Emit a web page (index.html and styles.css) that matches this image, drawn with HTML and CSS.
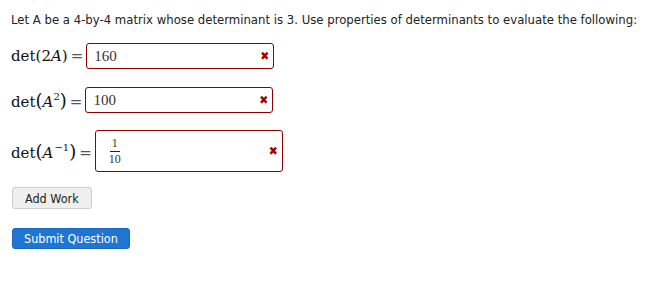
FILE: index.html
```html
<!DOCTYPE html>
<html lang="en">
  <head>
    <meta charset="UTF-8" />
    <title>Determinants</title>
    <link rel="stylesheet" href="styles.css">
  </head>
  <body>
    <main class="problem">
      <p class="intro">Let A be a 4-by-4 matrix whose determinant is 3. Use properties of determinants to evaluate the following:</p>

      <div class="row">
        <span class="math">det<span class="paren">(</span>2<i>A</i><span class="paren">)</span><span class="eq">=</span></span>
        <div class="answer">
          <span class="value">160</span>
          <span class="wrong">&#10006;</span>
        </div>
      </div>

      <div class="row">
        <span class="math">det<span class="paren big">(</span><i>A</i><sup>2</sup><span class="paren big">)</span><span class="eq">=</span></span>
        <div class="answer">
          <span class="value">100</span>
          <span class="wrong">&#10006;</span>
        </div>
      </div>

      <div class="row tall">
        <span class="math">det<span class="paren big">(</span><i>A</i><sup class="inv">&minus;1</sup><span class="paren big">)</span><span class="eq">=</span></span>
        <div class="answer frac-box">
          <span class="value frac">
            <span class="num">1</span>
            <span class="den">10</span>
          </span>
          <span class="wrong">&#10006;</span>
        </div>
      </div>

      <button class="btn-work">Add Work</button>
      <button class="btn-submit">Submit Question</button>
    </main>
  </body>
</html>
```

FILE: styles.css
```css
body {
  margin: 0;
  font-family: "DejaVu Sans Condensed", "DejaVu Sans", sans-serif;
  color: #222;
  background: #fff;
}
.problem {
  padding: 12px 11px;
}
.intro {
  margin: 0 0 15px 0;
  font-size: 13px;
  line-height: 16px;
  white-space: nowrap;
}
.row {
  display: flex;
  align-items: center;
  height: 26px;
  margin-bottom: 18px;
}
.row + .row {
  margin-bottom: 17px;
}
.row.tall {
  height: 42px;
  margin-bottom: 15px;
}
.math {
  font-family: "DejaVu Serif", "Liberation Serif", serif;
  font-size: 15px;
  color: #111;
  white-space: nowrap;
}
.math i {
  font-style: italic;
}
.math sup {
  font-size: 10px;
  vertical-align: 7px;
}
.math sup.inv {
  margin-left: 1px;
}
.paren.big {
  font-size: 18px;
}
.eq {
  margin: 0 3px;
  color: #555;
}
.answer {
  display: flex;
  align-items: center;
  justify-content: space-between;
  box-sizing: border-box;
  width: 188px;
  height: 26px;
  border: 1.5px solid #8f0000;
  border-radius: 3px;
  padding: 0 4px 0 7px;
}
.frac-box {
  height: 42px;
}
.value {
  font-family: "Liberation Serif", "DejaVu Serif", serif;
  font-size: 15px;
  color: #333;
}
.frac {
  display: inline-flex;
  flex-direction: column;
  align-items: center;
  font-size: 12px;
  line-height: 12px;
  margin-left: 6px;
}
.frac .num {
  padding: 0 2px 2px;
  border-bottom: 1px solid #222;
}
.frac .den {
  padding-top: 1px;
}
.wrong {
  color: #a50000;
  font-size: 12px;
  font-weight: bold;
}
button {
  display: block;
  font-family: "DejaVu Sans Condensed", "DejaVu Sans", sans-serif;
  font-size: 12.5px;
  border-radius: 3px;
  cursor: pointer;
}
.btn-work {
  height: 22px;
  margin-left: 1px;
  padding: 0 12px;
  margin-bottom: 19px;
  background: #efefef;
  border: 1px solid #ccc;
  color: #222;
}
.btn-submit {
  height: 21px;
  margin-left: 1px;
  padding: 0 11px;
  background: #1f75d3;
  border: 1px solid #1a69c0;
  color: #fff;
}
```
